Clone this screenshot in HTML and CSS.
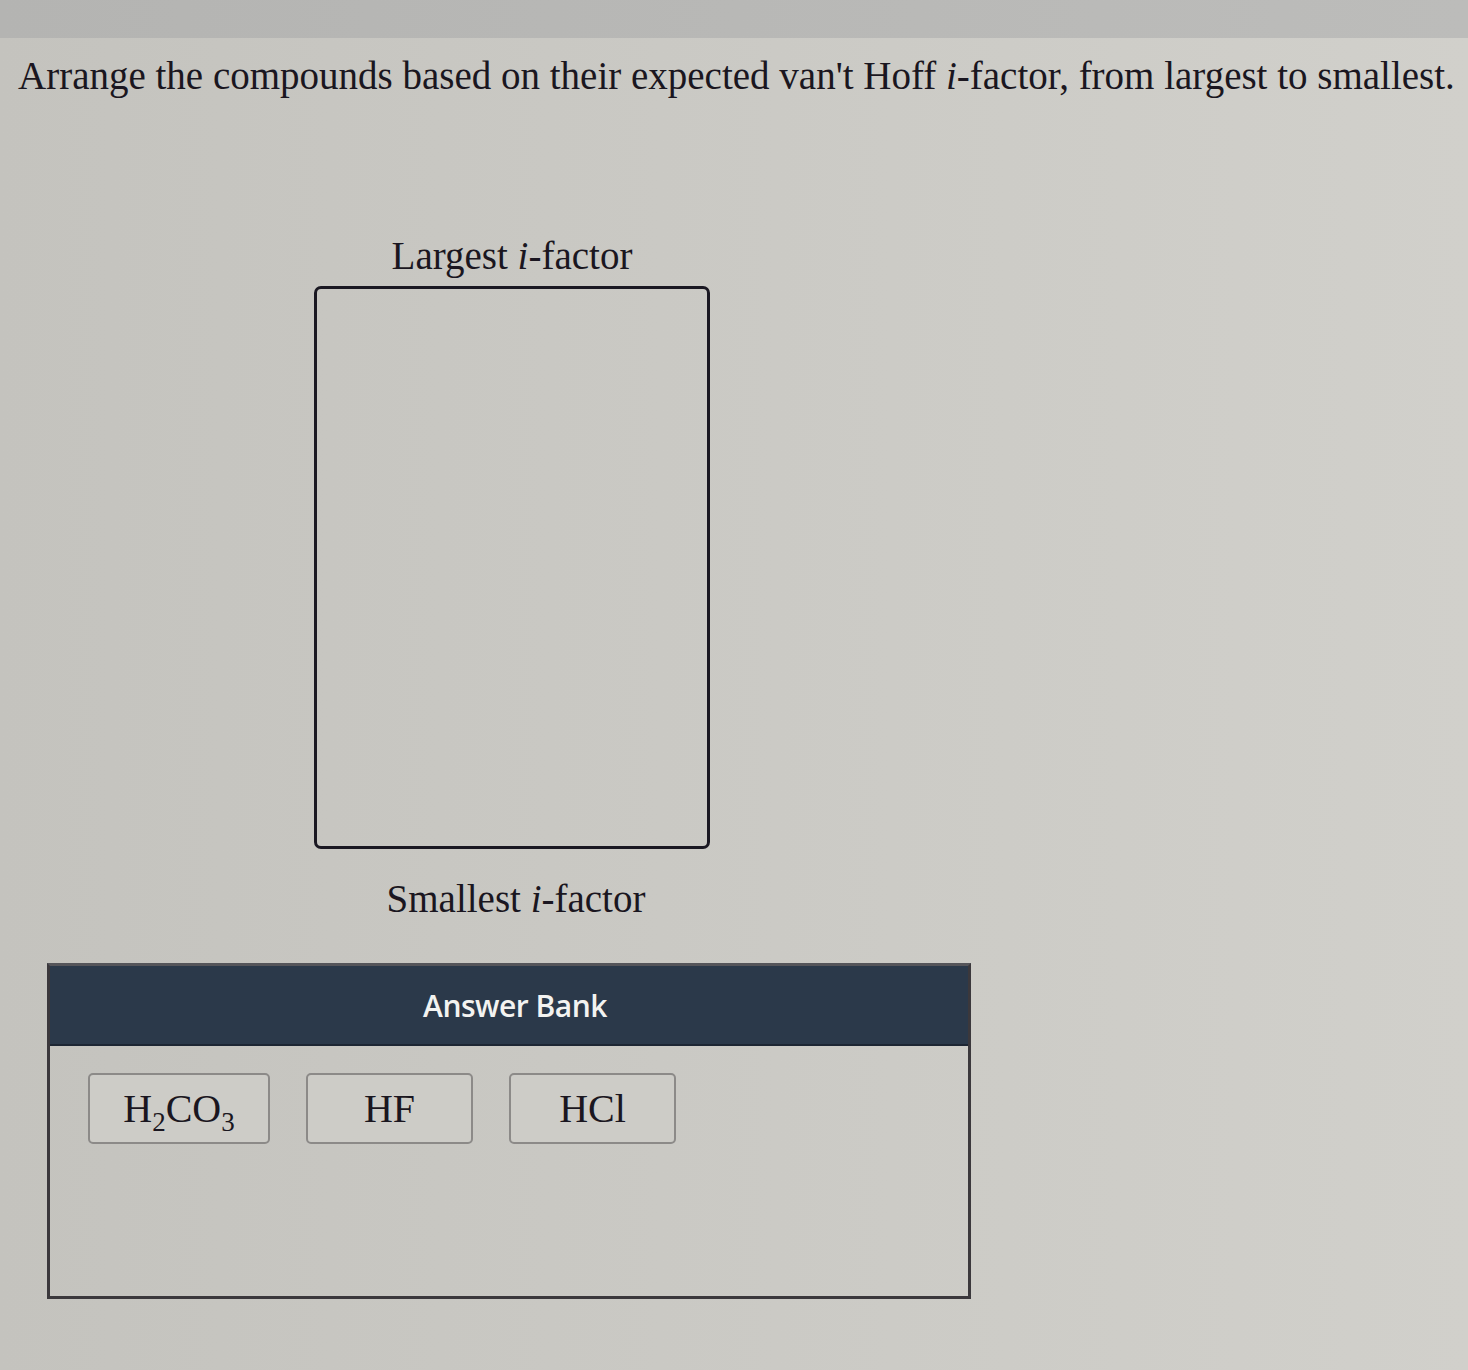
FILE: index.html
```html
<!DOCTYPE html>
<html lang="en">
<head>
    <meta charset="UTF-8">
    <meta name="viewport" content="width=device-width, initial-scale=1.0">
    <title>Ranking: van't Hoff factor</title>
<link rel="stylesheet" href="styles.css">
</head>
<body>
    <!-- Top toolbar strip -->
    <div class="topbar"></div>

    <!-- Question -->
    <p class="prompt">Arrange the compounds based on their expected van't Hoff <i>i</i>-factor, from largest to smallest.</p>

    <!-- Ranking target -->
    <div class="ranking">
        <div class="rank-label top">Largest <i>i</i>-factor</div>
        <div class="dropzone"></div>
        <div class="rank-label bottom">Smallest <i>i</i>-factor</div>
    </div>

    <!-- Answer bank -->
    <div class="bank">
        <div class="bank-header">Answer Bank</div>
        <div class="bank-items">
            <div class="chip chip-wide"><span>H<sub>2</sub>CO<sub>3</sub></span></div>
            <div class="chip"><span>HF</span></div>
            <div class="chip"><span>HCl</span></div>
        </div>
    </div>
</body>
</html>
```

FILE: styles.css
```css
* {
    box-sizing: border-box;
    margin: 0;
    padding: 0;
}

body {
    width: 1468px;
    height: 1370px;
    overflow: hidden;
    font-family: "Liberation Serif", "Times New Roman", serif;
    color: #1a1620;
    background: linear-gradient(90deg, #c4c3be 0%, #cac9c4 45%, #d1d0cb 100%);
}

.topbar {
    height: 38px;
    background: linear-gradient(90deg, #b4b4b2, #bcbcba);
}

.prompt {
    font-size: 39px;
    padding: 16px 0 0 18px;
    line-height: 44px;
    white-space: nowrap;
}

.ranking {
    width: 398px;
    margin: 136px 0 0 313px;
    display: flex;
    flex-direction: column;
    align-items: center;
}

.rank-label {
    font-size: 39px;
    line-height: 44px;
}

.rank-label.top {
    margin-bottom: 8px;
}

.rank-label.bottom {
    margin-top: 28px;
    padding-left: 8px;
}

.dropzone {
    width: 396px;
    height: 563px;
    border: 3px solid #1a1822;
    border-radius: 7px;
}

.bank {
    width: 924px;
    height: 336px;
    margin: 42px 0 0 47px;
    border: 3px solid #3b383c;
    border-top-color: #55555a;
}

.bank-header {
    height: 80px;
    background: #2b394a;
    color: #f3f3f1;
    font-family: "Open Sans", sans-serif;
    font-weight: 600;
    font-size: 30px;
    letter-spacing: -0.5px;
    display: flex;
    align-items: center;
    justify-content: center;
    padding-left: 12px;
    border-bottom: 2px solid #1d2633;
}

.bank-items {
    display: flex;
    gap: 36px;
    padding: 27px 0 0 38px;
}

.chip {
    width: 167px;
    height: 71px;
    border: 2px solid #8c8a88;
    border-radius: 5px;
    background: #cdccc7;
    font-size: 40px;
    display: flex;
    align-items: center;
    justify-content: center;
}

.chip-wide {
    width: 182px;
}

.chip sub {
    font-size: 27px;
    vertical-align: -9px;
    line-height: 0;
}
```
